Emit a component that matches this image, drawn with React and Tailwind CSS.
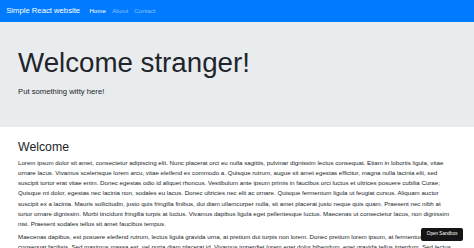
export default function App() {
  return (
    <div className="min-h-screen bg-white font-['Liberation_Sans',Arial,sans-serif] text-[#212529]">
      <nav className="flex h-[21.5px] items-center bg-[#007bff] px-[6.2px]">
        <span className="mr-[6.2px] text-[7.7px] leading-[11.5px] text-white">Simple React website</span>
        <div className="flex">
          <span className="px-[3.1px] text-[6.16px] leading-[9.2px] text-white">Home</span>
          <span className="px-[3.1px] text-[6.16px] leading-[9.2px] text-white/50">About</span>
          <span className="px-[3.1px] text-[6.16px] leading-[9.2px] text-white/50">Contact</span>
        </div>
      </nav>

      <header className="bg-[#e9ecef] px-[18px] pb-[23.5px] pt-[24.6px]">
        <h1 className="mb-[6.5px] text-[27.7px] font-light leading-[33.2px]">Welcome stranger!</h1>
        <p className="mb-[6.2px] text-[7.7px] font-light leading-[11.55px]">Put something witty here!</p>
      </header>

      <main className="px-[18px] pt-[13px]">
        <h2 className="mb-[3px] text-[12.3px] leading-[14.8px]">Welcome</h2>
        <p className="mb-[3px] text-[6.16px] leading-[10.17px]">
          Lorem ipsum dolor sit amet, consectetur adipiscing elit. Nunc placerat orci eu nulla sagittis, pulvinar dignissim lectus consequat. Etiam in lobortis ligula, vitae ornare lacus. Vivamus scelerisque lorem arcu, vitae eleifend ex commodo a. Quisque rutrum, augue sit amet egestas efficitur, magna nulla lacinia elit, sed suscipit tortor erat vitae enim. Donec egestas odio id aliquet rhoncus. Vestibulum ante ipsum primis in faucibus orci luctus et ultrices posuere cubilia Curae; Quisque mi dolor, egestas nec lacinia non, sodales eu lacus. Donec ultricies nec elit ac ornare. Quisque fermentum ligula ut feugiat cursus. Aliquam auctor suscipit ex a lacinia. Mauris sollicitudin, justo quis fringilla finibus, dui diam ullamcorper nulla, sit amet placerat justo neque quis quam. Praesent nec nibh at tortor ornare dignissim. Morbi tincidunt fringilla turpis at luctus. Vivamus dapibus ligula eget pellentesque luctus. Maecenas ut consectetur lacus, non dignissim nisi. Praesent sodales tellus sit amet faucibus tempus.
        </p>
        <p className="mb-[3px] text-[6.16px] leading-[10.17px]">
          Maecenas dapibus, est posuere eleifend rutrum, lectus ligula gravida urna, at pretium dui turpis non lorem. Donec pretium lorem ipsum, at fermentum nisl consequat facilisis. Sed maximus massa est, vel porta diam placerat id. Vivamus imperdiet lorem eget dolor bibendum, eget gravida tellus interdum. Sed lectus nibh, tincidunt at nunc vel, suscipit ultrices massa. Nulla facilisi. Curabitur eget ante sed risus consequat tempor.
        </p>
      </main>

      <div className="fixed bottom-[7px] right-[11px] flex h-[13px] items-center rounded-[2px] bg-[#151515] px-[5.5px] text-[4.6px] text-white">
        Open Sandbox
      </div>
    </div>
  );
}
